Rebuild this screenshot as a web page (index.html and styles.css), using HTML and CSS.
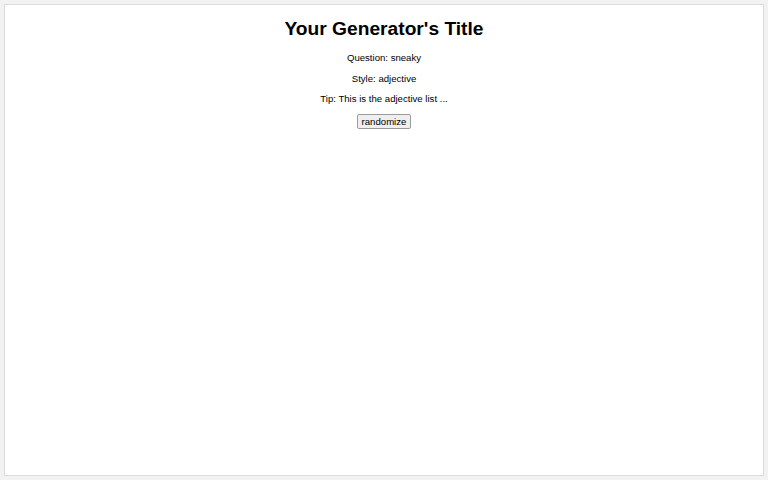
FILE: index.html
```html
<!DOCTYPE html>
<html>
<head>
<meta charset="utf-8">
<link rel="stylesheet" href="styles.css">
</head>
<body>
<div class="card">
  <h1 class="title">Your Generator's Title</h1>
  <p class="line">Question: sneaky</p>
  <p class="line">Style: adjective</p>
  <p class="line">Tip: This is the adjective list ...</p>
  <div class="actions"><button class="btn">randomize</button></div>
</div>
</body>
</html>
```
FILE: styles.css
```css
html, body {
  margin: 0;
  padding: 0;
  height: 100%;
}
body {
  background: #f2f2f2;
  font-family: "Liberation Sans", Arial, sans-serif;
  color: #000;
}
.card {
  box-sizing: border-box;
  margin: 4px 4px 0 4px;
  height: 472px;
  background: #fff;
  border: 1px solid #dcdcdc;
  text-align: center;
  padding-top: 14px;
}
.title {
  font-size: 19.2px;
  font-weight: bold;
  margin: 0 0 14px 0;
  line-height: 19px;
}
.line {
  font-size: 9.6px;
  margin: 0 0 8px 0;
  line-height: 12.5px;
}
.actions {
  display: flex;
  justify-content: center;
  margin-top: 0;
}
.btn {
  font-family: "Liberation Sans", Arial, sans-serif;
  font-size: 9.6px;
  line-height: 13px;
  padding: 0 4px;
  background: #efefef;
  border: 1px solid #9a9a9a;
  border-radius: 2px;
  color: #000;
}
```
